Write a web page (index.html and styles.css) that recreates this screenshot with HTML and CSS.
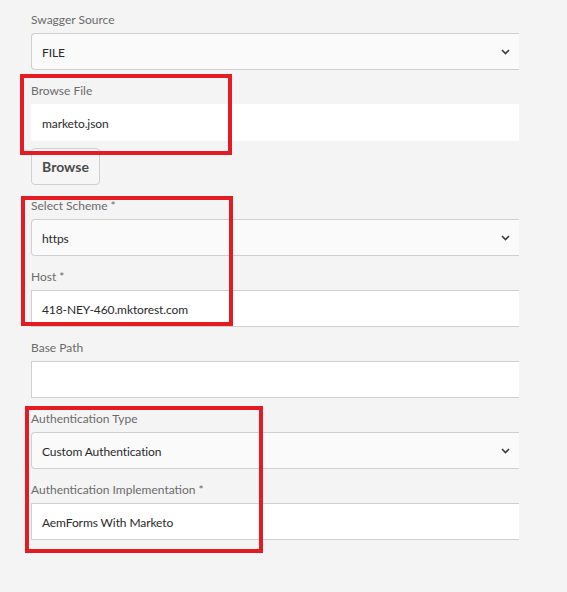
FILE: index.html
```html
<!DOCTYPE html>
<html lang="en">
<head>
<meta charset="utf-8">
<title>Swagger Source</title>
<link rel="stylesheet" href="styles.css">
</head>
<body>
<div class="form">
  <div class="field">
    <label class="label">Swagger Source</label>
    <div class="control select"><span class="value">FILE</span>
      <svg class="chev" width="9" height="6" viewBox="0 0 9 6"><polyline points="1,1 4.5,4.5 8,1" fill="none" stroke="#3a3a3a" stroke-width="1.6"/></svg>
    </div>
  </div>
  <div class="field">
    <label class="label">Browse File</label>
    <div class="control input plain"><span class="value">marketo.json</span></div>
    <div class="btn-row"><button class="btn">Browse</button></div>
  </div>
  <div class="field">
    <label class="label">Select Scheme *</label>
    <div class="control select"><span class="value">https</span>
      <svg class="chev" width="9" height="6" viewBox="0 0 9 6"><polyline points="1,1 4.5,4.5 8,1" fill="none" stroke="#3a3a3a" stroke-width="1.6"/></svg>
    </div>
  </div>
  <div class="field">
    <label class="label">Host *</label>
    <div class="control input"><span class="value">418-NEY-460.mktorest.com</span></div>
  </div>
  <div class="field">
    <label class="label">Base Path</label>
    <div class="control input"><span class="value"></span></div>
  </div>
  <div class="field">
    <label class="label">Authentication Type</label>
    <div class="control select"><span class="value">Custom Authentication</span>
      <svg class="chev" width="9" height="6" viewBox="0 0 9 6"><polyline points="1,1 4.5,4.5 8,1" fill="none" stroke="#3a3a3a" stroke-width="1.6"/></svg>
    </div>
  </div>
  <div class="field">
    <label class="label">Authentication Implementation *</label>
    <div class="control input"><span class="value">AemForms With Marketo</span></div>
  </div>
</div>
<div class="mark mark-1"></div>
<div class="mark mark-2"></div>
<div class="mark mark-3"></div>
</body>
</html>
```
FILE: styles.css
```css
html, body {
  margin: 0;
  padding: 0;
  background: #f4f4f4;
}
body {
  font-family: Lato, "Open Sans", sans-serif;
  color: #2c2c2c;
  width: 567px;
  height: 592px;
  overflow: hidden;
  position: relative;
}
.form {
  display: flex;
  flex-direction: column;
  gap: 11px;
  padding: 10px 0 0 31px;
  width: 488px;
}
.field {
  display: flex;
  flex-direction: column;
}
.label {
  font-size: 12px;
  line-height: 16px;
  padding-top: 2px;
  color: #6b6b6b;
  margin-bottom: 5px;
}
.control {
  box-sizing: border-box;
  height: 37px;
  display: flex;
  align-items: center;
  padding: 1px 9px 0 10px;
  border: 1px solid #cfcfcf;
  border-right: none;
  font-size: 12px;
  letter-spacing: -0.1px;
  color: #2a2a2a;
}
.select {
  background: #fafafa;
  border-radius: 4px 0 0 4px;
  justify-content: space-between;
}
.input {
  background: #ffffff;
}
.input.plain {
  border-color: #ffffff;
}
.btn-row {
  display: flex;
  margin-top: 7px;
}
.btn {
  box-sizing: border-box;
  height: 37px;
  width: 69px;
  padding: 0;
  font-family: Lato, "Open Sans", sans-serif;
  font-weight: 700;
  font-size: 14px;
  color: #4b4b4b;
  background: #f6f6f6;
  border: 1px solid #cfcfcf;
  border-radius: 4px;
}
.chev {
  display: block;
  margin-top: 0;
}
.mark {
  position: absolute;
  box-sizing: border-box;
  border: 4px solid #e31c24;
}
.mark-1 { left: 20px; top: 74px; width: 212px; height: 81px; }
.mark-2 { left: 21px; top: 196px; width: 212px; height: 130px; }
.mark-3 { left: 25px; top: 406px; width: 238px; height: 147px; }
```
